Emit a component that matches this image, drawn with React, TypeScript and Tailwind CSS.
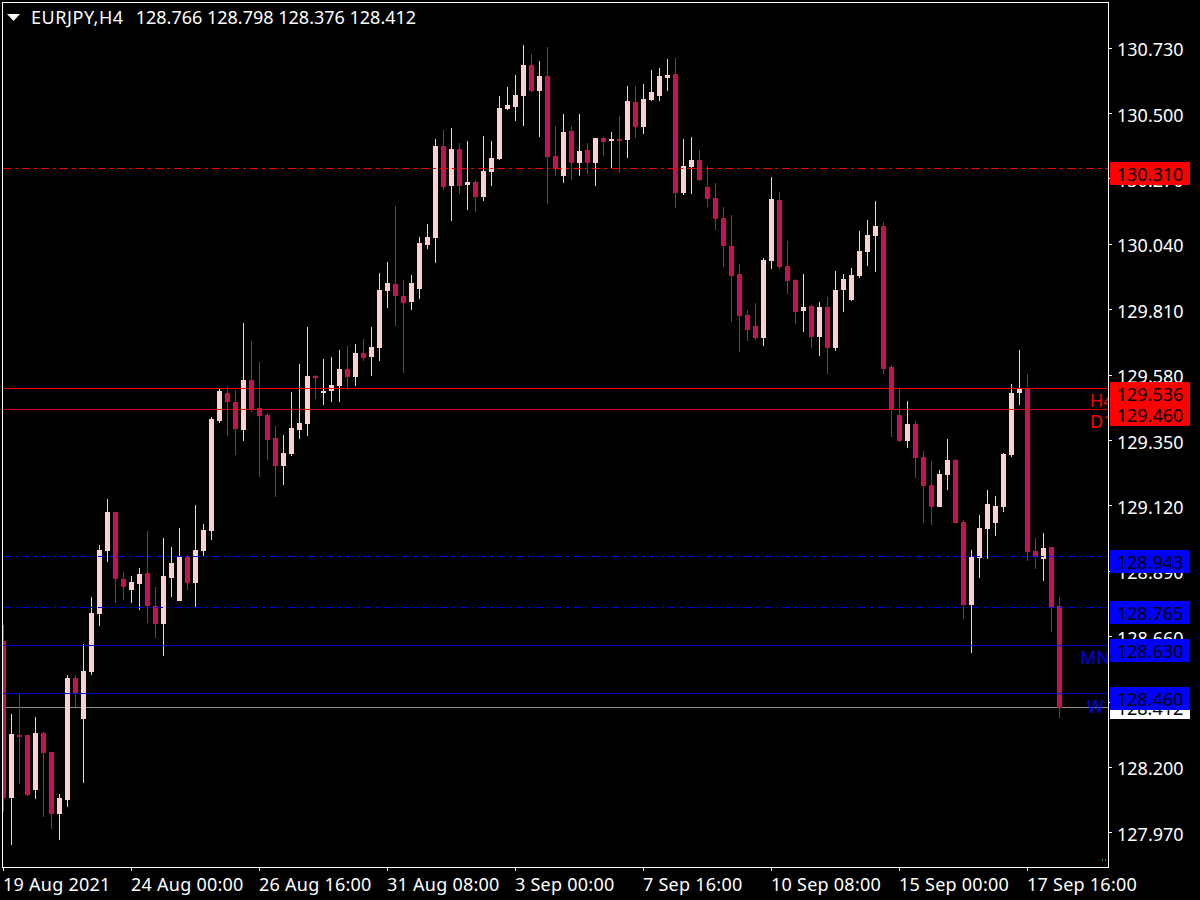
import React from "react";

// [high, bodyTop, bodyBottom, low, bull(1)/bear(0)] for candle i at x = 3 + 8i
const candles: [number, number, number, number, number][] = [
  [625,641,798,812,0],[714,734,798,845,1],[694,735,737,784,0],[735,735,795,796,0],[717,733,790,799,1],
  [732,733,753,817,0],[752,752,814,829,0],[794,798,814,840,1],[675,678,800,807,1],[675,678,693,707,0],
  [644,671,719,783,1],[597,613,672,675,1],[545,550,614,626,1],[499,512,551,562,1],[512,512,579,603,0],
  [572,579,587,600,0],[576,582,590,603,1],[568,574,584,610,1],[531,573,606,623,0],[587,606,624,638,0],
  [538,576,624,656,1],[547,563,578,597,1],[528,557,601,601,1],[555,557,583,590,0],[505,550,583,607,1],
  [524,530,551,556,1],[417,419,531,540,1],[389,391,421,423,1],[386,393,402,436,0],[390,402,429,455,0],
  [323,380,430,441,1],[341,380,410,412,0],[362,408,416,477,0],[413,415,440,460,0],[426,438,466,497,0],
  [435,453,466,485,1],[392,428,454,456,1],[364,423,430,439,1],[327,376,424,436,1],[375,376,378,399,0],
  [359,391,393,405,1],[357,385,391,402,1],[350,369,386,402,1],[346,369,377,390,0],[344,353,377,386,1],
  [339,353,358,361,0],[327,347,357,376,1],[273,290,348,361,1],[262,283,291,308,1],[206,284,296,326,0],
  [280,296,303,373,0],[275,283,302,310,1],[237,243,289,299,1],[224,237,245,249,1],[139,146,238,263,1],
  [130,146,187,190,0],[128,149,186,221,1],[143,149,186,194,0],[141,182,185,210,1],[180,182,197,212,0],
  [136,171,197,201,1],[141,158,172,186,1],[96,108,159,160,1],[87,105,109,110,1],[75,95,107,121,1],
  [45,65,96,126,1],[54,65,91,92,0],[61,76,91,137,1],[47,76,157,204,0],[126,156,169,176,0],
  [114,132,176,183,1],[126,131,163,180,0],[114,151,163,176,1],[143,150,163,174,0],[138,138,163,186,1],
  [137,138,142,156,0],[132,139,141,168,1],[116,139,141,173,0],[86,101,140,158,1],[86,102,127,138,0],
  [84,99,127,134,1],[70,92,100,101,1],[68,76,96,101,1],[59,75,78,91,1],[58,74,193,208,0],
  [139,166,193,195,1],[137,160,167,194,1],[150,160,180,181,0],[166,187,199,207,0],[183,198,219,230,0],
  [207,218,246,267,0],[215,246,276,322,0],[264,274,316,352,0],[310,315,330,341,0],[303,326,338,340,0],
  [258,260,338,346,1],[177,199,261,269,1],[192,200,267,269,0],[241,266,281,294,0],[279,280,312,324,0],
  [274,307,311,332,1],[305,306,337,348,0],[302,307,337,356,1],[297,307,348,374,0],[271,290,348,351,1],
  [274,279,290,312,1],[268,275,300,301,1],[231,251,276,278,1],[220,235,252,266,1],[201,226,236,272,1],
  [222,226,369,374,0],[365,367,409,437,0],[389,415,441,442,0],[401,424,441,448,1],[421,424,458,478,0],
  [451,457,486,523,0],[461,485,507,525,0],[470,474,507,507,1],[439,460,475,490,1],[459,460,523,523,0],
  [520,522,605,619,0],[550,557,605,653,1],[515,528,558,578,1],[490,504,529,559,1],[496,506,523,536,1],
  [453,454,507,512,1],[384,393,455,457,1],[350,389,393,405,1],[374,389,552,561,0],[538,551,557,569,0],
  [533,548,559,581,1],[547,547,608,632,0],[597,606,708,718,0],
];

const BULL = "#fdd0d0";
const BEAR = "#bf1558";

const ticks = ["130.730","130.500","130.270","130.040","129.810","129.580","129.350","129.120","128.890","128.660","128.430","128.200","127.970"];
const dates = ["19 Aug 2021","24 Aug 00:00","26 Aug 16:00","31 Aug 08:00","3 Sep 00:00","7 Sep 16:00","10 Sep 08:00","15 Sep 00:00","17 Sep 16:00"];

function HLine({ y, color, dash }: { y: number; color: string; dash?: boolean }) {
  return <line x1={3} x2={1108} y1={y + 0.5} y2={y + 0.5} stroke={color} strokeWidth={1} strokeDasharray={dash ? "8 4 3 4" : undefined} />;
}

export default function App() {
  return (
    <div className="relative flex h-[900px] w-[1200px] flex-col overflow-hidden bg-black pl-[2px] pt-[2px] font-['Noto_Sans',sans-serif] text-[18px] leading-[22px] text-white">
      <div className="flex h-[866px] flex-none">
        <div className="relative h-[866px] w-[1107px] flex-none overflow-hidden border border-white">
          <svg className="block h-[864px] w-[1105px]" viewBox="3 3 1105 864" shapeRendering="crispEdges">
            <HLine y={707} color="#8c8c8c" />
            {candles.map(([h, t, b, l, up], i) => {
              const x = 3 + 8 * i;
              const c = up ? BULL : BEAR;
              return (
                <g key={i} fill={c}>
                  <rect x={x} y={h} width={1} height={l - h} />
                  <rect x={x - 2} y={t} width={5} height={b - t} />
                </g>
              );
            })}
            <HLine y={168} color="#ff0000" dash />
            <HLine y={388} color="#ff0000" />
            <HLine y={409} color="#d80000" />
            <HLine y={556} color="#0000ff" dash />
            <HLine y={607} color="#0000d8" dash />
            <HLine y={645} color="#0000d0" />
            <HLine y={693} color="#0000d0" />
            <rect x={1102} y={859} width={1} height={2} fill="#0f8f70" />
            <rect x={1105} y={859} width={1} height={2} fill="#0f8f70" />
          </svg>

          <div className="absolute left-[4px] top-[3px] flex h-[22px] items-center whitespace-nowrap">
            <svg width="13" height="7" viewBox="0 0 13 7" className="mr-[11px] flex-none">
              <path d="M0 0H13L6.5 7Z" fill="#ffffff" />
            </svg>
            <span className="tracking-[0.55px]">EURJPY,H4</span>
            <span className="ml-[12px]">128.766 128.798 128.376 128.412</span>
          </div>

          <span className="absolute left-[1087px] top-[386px] whitespace-nowrap text-[#ff0000]">H4</span>
          <span className="absolute left-[1087px] top-[407px] whitespace-nowrap text-[#ff0000]">D1</span>
          <span className="absolute left-[1077px] top-[643px] whitespace-nowrap text-[#0000e8]">MN</span>
          <span className="absolute left-[1084px] top-[692px] whitespace-nowrap text-[#0000e8]">W</span>
        </div>

        <div className="flex flex-col pt-[13.5px]">
          {ticks.map((t) => (
            <div key={t} className="flex h-[65.4px] flex-none items-center">
              <div className="h-px w-[3px] bg-white" />
              <span className="ml-[5px] mt-[2px]">{t}</span>
            </div>
          ))}
        </div>
      </div>

      <div className="flex flex-1 pl-px">
        {dates.map((d) => (
          <div key={d} className="w-[128px] flex-none">
            <div className="h-[3px] w-px bg-white" />
            <span className="mt-[2px] block whitespace-nowrap tracking-[0.25px]">{d}</span>
          </div>
        ))}
      </div>

      <div className="absolute left-[1110px] top-[162px] flex h-[23px] w-[80px] items-center justify-center bg-[#ff0000] text-black">130.310</div>
      <div className="absolute left-[1110px] top-[382px] flex h-[23px] w-[80px] items-center justify-center bg-[#ff0000] text-black">129.536</div>
      <div className="absolute left-[1110px] top-[403px] flex h-[23px] w-[80px] items-center justify-center bg-[#ff0000] text-black">129.460</div>
      <div className="absolute left-[1110px] top-[696px] flex h-[23px] w-[80px] items-center justify-center bg-white text-black">128.412</div>
      <div className="absolute left-[1110px] top-[550px] flex h-[23px] w-[80px] items-center justify-center bg-[#0000ff] text-black">128.943</div>
      <div className="absolute left-[1110px] top-[601px] flex h-[23px] w-[80px] items-center justify-center bg-[#0000ff] text-black">128.765</div>
      <div className="absolute left-[1110px] top-[639px] flex h-[23px] w-[80px] items-center justify-center bg-[#0000ff] text-black">128.630</div>
      <div className="absolute left-[1110px] top-[687px] flex h-[23px] w-[80px] items-center justify-center bg-[#0000ff] text-black">128.460</div>
    </div>
  );
}
